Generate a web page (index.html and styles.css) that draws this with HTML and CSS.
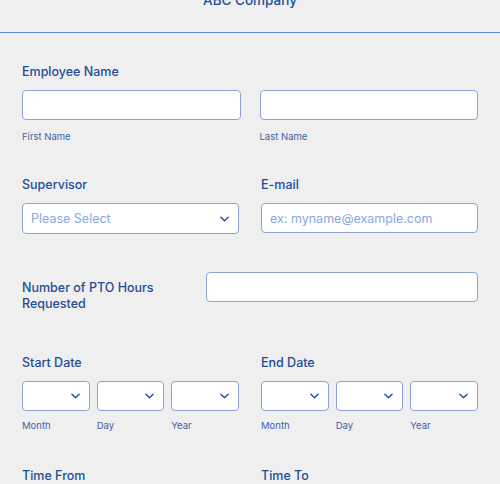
FILE: index.html
```html
<!DOCTYPE html>
<html>
    <head>
        <title>Time Off Request</title>
        <link rel="stylesheet" href="styles.css">
    </head>
<body>
    <div class="header">
        <h2 class="company">ABC Company</h2>
    </div>

    <form class="form">
        <div class="field">
            <label class="label">Employee Name</label>
            <div class="row row-name">
                <div>
                    <input class="input" type="text">
                    <span class="sublabel">First Name</span>
                </div>
                <div>
                    <input class="input" type="text">
                    <span class="sublabel">Last Name</span>
                </div>
            </div>
        </div>

        <div class="row row-contact">
            <div class="field">
                <label class="label">Supervisor</label>
                <div class="select">
                    <span class="placeholder">Please Select</span>
                    <svg class="chevron" viewBox="0 0 10 6"><path d="M1 1l4 4 4-4"/></svg>
                </div>
            </div>
            <div class="field">
                <label class="label">E-mail</label>
                <input class="input" type="email" placeholder="ex: myname@example.com">
            </div>
        </div>

        <div class="field field-inline">
            <label class="label">Number of PTO Hours Requested</label>
            <input class="input" type="text">
        </div>

        <div class="row">
            <div class="field">
                <label class="label">Start Date</label>
                <div class="date">
                    <div>
                        <div class="select"><svg class="chevron" viewBox="0 0 10 6"><path d="M1 1l4 4 4-4"/></svg></div>
                        <span class="sublabel">Month</span>
                    </div>
                    <div>
                        <div class="select"><svg class="chevron" viewBox="0 0 10 6"><path d="M1 1l4 4 4-4"/></svg></div>
                        <span class="sublabel">Day</span>
                    </div>
                    <div>
                        <div class="select"><svg class="chevron" viewBox="0 0 10 6"><path d="M1 1l4 4 4-4"/></svg></div>
                        <span class="sublabel">Year</span>
                    </div>
                </div>
            </div>
            <div class="field">
                <label class="label">End Date</label>
                <div class="date">
                    <div>
                        <div class="select"><svg class="chevron" viewBox="0 0 10 6"><path d="M1 1l4 4 4-4"/></svg></div>
                        <span class="sublabel">Month</span>
                    </div>
                    <div>
                        <div class="select"><svg class="chevron" viewBox="0 0 10 6"><path d="M1 1l4 4 4-4"/></svg></div>
                        <span class="sublabel">Day</span>
                    </div>
                    <div>
                        <div class="select"><svg class="chevron" viewBox="0 0 10 6"><path d="M1 1l4 4 4-4"/></svg></div>
                        <span class="sublabel">Year</span>
                    </div>
                </div>
            </div>
        </div>

        <div class="row">
            <div class="field">
                <label class="label">Time From</label>
            </div>
            <div class="field">
                <label class="label">Time To</label>
            </div>
        </div>
    </form>
</body>
</html>
```

FILE: styles.css
```css
body {
    font-family: Inter, "Noto Sans", sans-serif;
    margin: 0;
    padding: 0;
    background-color: #efefef;
    color: #1f4d96;
    overflow: hidden;
}

.header {
    display: flow-root;
    height: 32px;
    border-bottom: 1px solid #5b8ad6;
    text-align: center;
}

.company {
    margin: -8px 0 0;
    font-size: 13.5px;
    font-weight: 500;
    line-height: 17px;
    color: #2350a0;
}

.form {
    padding: 31px 22px 0;
}

.field {
    display: flex;
    flex-direction: column;
}

.label {
    font-size: 12.5px;
    font-weight: 500;
    line-height: 16px;
    margin-bottom: 10px;
    color: #1f4d96;
}

.row {
    display: grid;
    grid-template-columns: 1fr 1fr;
    column-gap: 22px;
    margin-bottom: 36px;
}

.row-name {
    column-gap: 19px;
    margin-bottom: 0;
}

.field > .row-name {
    margin-bottom: 34px;
}

.row-contact {
    margin-bottom: 38px;
}

.input,
.select {
    box-sizing: border-box;
    width: 100%;
    height: 30px;
    margin: 0;
    padding: 0 8px;
    background: #fff;
    border: 1px solid #8aa3cf;
    border-radius: 4px;
    font-family: inherit;
    font-size: 12.5px;
    color: #1f4d96;
    outline: none;
}

.input::placeholder {
    color: #86a8e2;
}

.select {
    display: flex;
    align-items: center;
    justify-content: space-between;
    height: 31px;
}

.placeholder {
    color: #86a8e2;
}

.chevron {
    width: 9px;
    height: 6px;
    margin-left: auto;
    margin-right: 1px;
    fill: none;
    stroke: #2350a0;
    stroke-width: 1.6;
    stroke-linecap: round;
    stroke-linejoin: round;
}

.sublabel {
    display: block;
    margin-top: 11px;
    font-size: 9.5px;
    line-height: 12px;
    color: #3b63a8;
}

.field-inline {
    display: grid;
    grid-template-columns: 168px 1fr;
    column-gap: 16px;
    align-items: start;
    margin-bottom: 43px;
}

.field-inline .label {
    margin: 8px 0 0;
}

.date {
    display: grid;
    grid-template-columns: 1fr 1fr 1fr;
    column-gap: 7px;
}

.date .select {
    height: 30px;
}

.date .sublabel {
    margin-top: 9px;
}
```
